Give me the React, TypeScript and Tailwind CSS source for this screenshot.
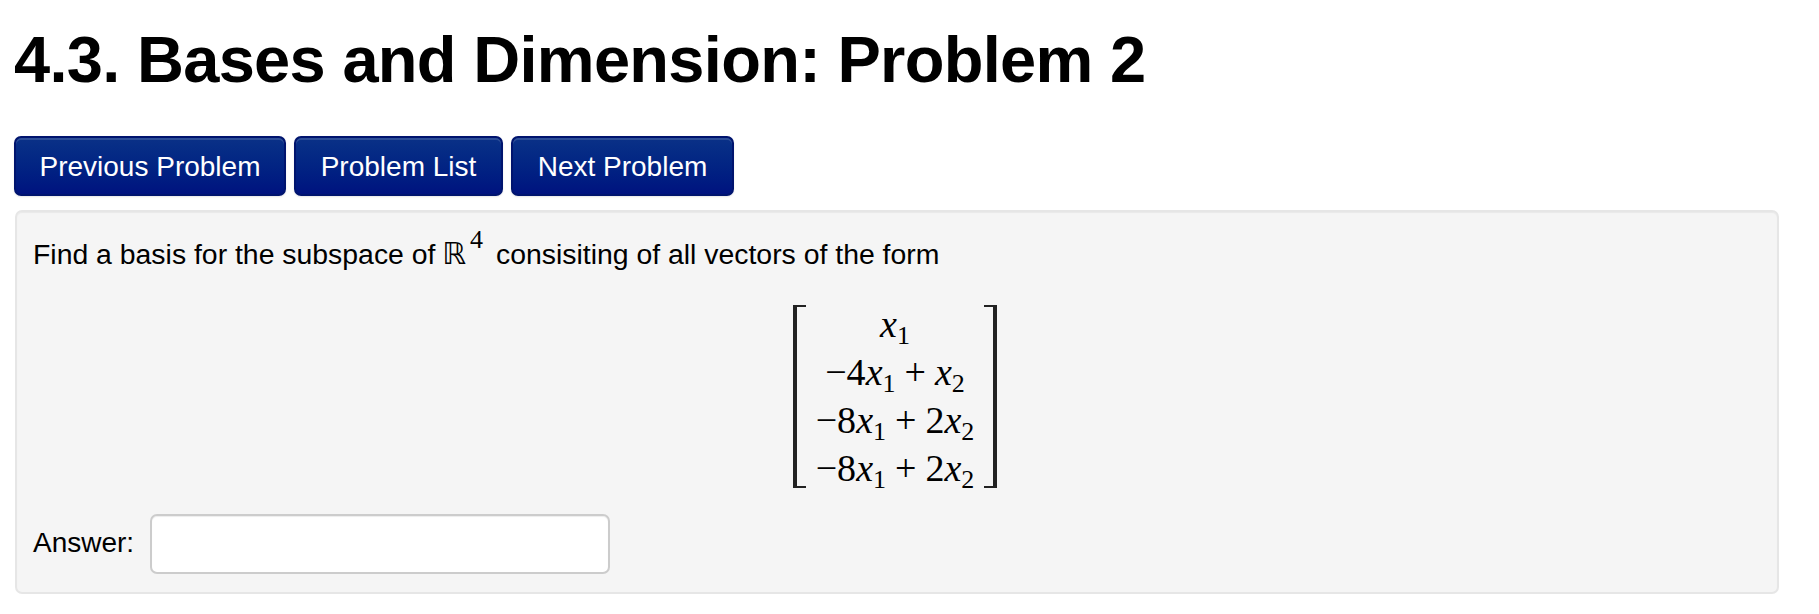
const sans = "font-['Liberation_Sans',Arial,sans-serif]";

function NavButton({ label, width }: { label: string; width: string }) {
  return (
    <button
      className={`flex h-[60px] items-center justify-center rounded-[7px] border-2 border-[#00146e] bg-gradient-to-b from-[#0a3187] to-[#00127f] pt-[2px] text-[28px] text-white shadow-[0_1px_2px_rgba(0,0,0,0.1),inset_0_2px_0_rgba(255,255,255,0.15)] ${width}`}
    >
      {label}
    </button>
  );
}

function X({ n }: { n: number }) {
  return (
    <>
      <i>x</i>
      <sub className="relative top-[7px] align-baseline text-[26px] leading-[0]">{n}</sub>
    </>
  );
}

function MathRow({ children }: { children: React.ReactNode }) {
  return <div className="h-[48px] whitespace-pre text-center leading-[48px]">{children}</div>;
}

function Plus() {
  return <span className="mx-[9px]">+</span>;
}

export default function App() {
  return (
    <div className={`${sans} h-[614px] w-[1819px] overflow-hidden bg-white pl-[14px] pr-[40px] text-black`}>
      <h1 className="pt-[24px] text-[65px] font-bold leading-[72px] tracking-[-0.7px]">
        4.3. Bases and Dimension: Problem 2
      </h1>

      <div className="mt-[40px] flex gap-[8px]">
        <NavButton label="Previous Problem" width="w-[272px]" />
        <NavButton label="Problem List" width="w-[209px]" />
        <NavButton label="Next Problem" width="w-[223px]" />
      </div>

      <div className="mt-[14px] ml-[1px] h-[384px] rounded-[7px] border-2 border-[#e6e6e6] bg-[#f5f5f5] pl-[16px] pt-[18px] shadow-[inset_0_1px_1px_rgba(0,0,0,0.05)]">
        <p className="flex h-[48px] items-baseline whitespace-pre text-[28.4px] leading-[48px]">
          <span>Find a basis for the subspace of </span>
          <span className="-ml-[1px] font-['DejaVu_Sans',sans-serif] text-[30px]">ℝ</span>
          <sup className="relative top-[-16px] ml-[4px] align-baseline font-['Liberation_Serif',serif] text-[26px] leading-none">
            4
          </sup>
          <span className="ml-[5px]"> consisiting of all vectors of the form</span>
        </p>

        <div className="mt-[27px] flex justify-center pr-[20px]">
          <div className="flex h-[183px] w-[204px] font-['Liberation_Serif',serif] text-[38px]">
            <div className="w-[13px] border-y-2 border-l-[4px] border-[#222]" />
            <div className="-mt-[5px] flex-1">
              <MathRow>
                <X n={1} />
              </MathRow>
              <MathRow>
                −4
                <X n={1} />
                <Plus />
                <X n={2} />
              </MathRow>
              <MathRow>
                −8
                <X n={1} />
                <Plus />2
                <X n={2} />
              </MathRow>
              <MathRow>
                −8
                <X n={1} />
                <Plus />2
                <X n={2} />
              </MathRow>
            </div>
            <div className="w-[13px] border-y-2 border-r-[4px] border-[#222]" />
          </div>
        </div>

        <div className="mt-[26px] flex items-center text-[28px]">
          <span className="w-[117px] pb-[3px]">Answer:</span>
          <input
            type="text"
            className="h-[60px] w-[460px] rounded-[7px] border-2 border-[#cccccc] bg-white shadow-[inset_0_1px_1px_rgba(0,0,0,0.075)] outline-none"
          />
        </div>
      </div>
    </div>
  );
}
